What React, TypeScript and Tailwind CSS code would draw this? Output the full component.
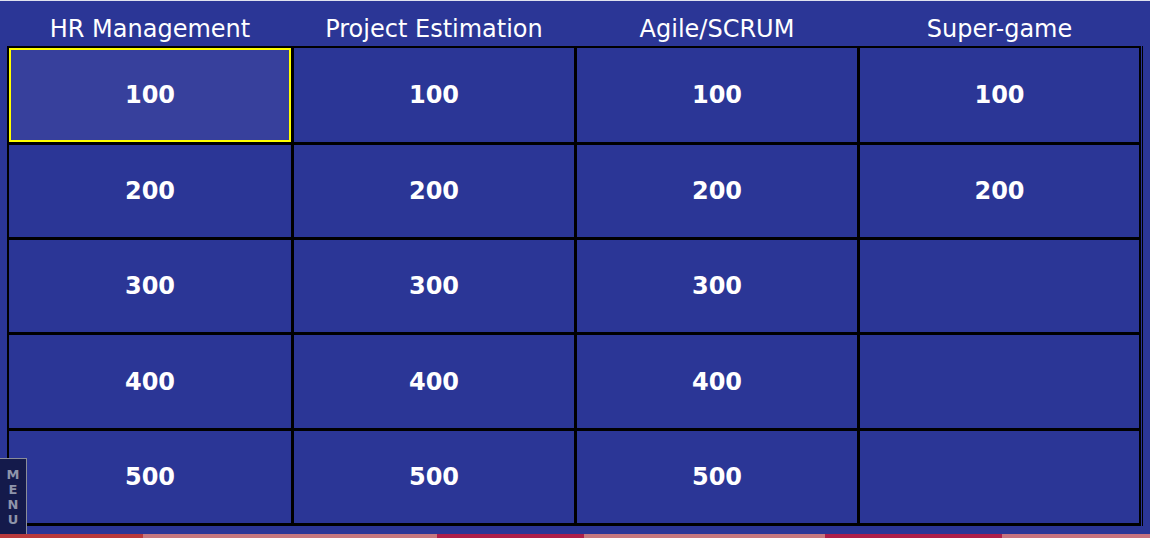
const categories = ["HR Management", "Project Estimation", "Agile/SCRUM", "Super-game"];

// null = question already played
const board: (number | null)[][] = [
  [100, 100, 100, 100],
  [200, 200, 200, 200],
  [300, 300, 300, null],
  [400, 400, 400, null],
  [500, 500, 500, null],
];

const strip = [
  { w: "w-[143px]", c: "bg-[#b93a3c]" },
  { w: "w-[294px]", c: "bg-[#c6787f]" },
  { w: "w-[147px]", c: "bg-[#ae1f4a]" },
  { w: "w-[241px]", c: "bg-[#c6787f]" },
  { w: "w-[177px]", c: "bg-[#ae1f4a]" },
  { w: "flex-1", c: "bg-[#c7737f]" },
];

export default function App() {
  return (
    <div
      className="relative flex h-[538px] w-[1150px] flex-col overflow-hidden bg-[#2b3696] text-white"
      style={{ fontFamily: '"DejaVu Sans", Verdana, sans-serif' }}
    >
      <div className="h-px bg-[#dfe2ee]" />

      {/* category headers */}
      <div className="ml-[9px] grid h-[45px] grid-cols-[282px_280px_280px_279px] gap-[3px]">
        {categories.map((name) => (
          <div key={name} className="pt-[14px] text-center text-[24px] leading-[28px]">
            {name}
          </div>
        ))}
      </div>

      {/* board */}
      <div className="ml-[7px] flex w-[1136px]">
        <div className="grid grid-cols-[282px_280px_280px_279px] grid-rows-[94px_92px_92px_93px_92px] gap-[3px] bg-black p-[2px] pb-[3px]">
          {board.flatMap((row, r) =>
            row.map((value, c) => {
              const active = r === 0 && c === 0;
              return (
                <div
                  key={`${r}-${c}`}
                  className={
                    active
                      ? "flex items-center justify-center border-2 border-[#ffff00] bg-[#37409c] text-[24px] font-bold"
                      : "flex items-center justify-center bg-[#2b3696] text-[24px] font-bold"
                  }
                >
                  {value ?? ""}
                </div>
              );
            })
          )}
        </div>
        <div className="w-px" />
        <div className="w-px bg-black" />
      </div>

      <div className="flex-1" />

      {/* bottom strip of next section */}
      <div className="flex h-[4px]">
        {strip.map((s, i) => (
          <div key={i} className={`${s.w} ${s.c}`} />
        ))}
      </div>

      {/* side menu tab */}
      <div className="absolute bottom-[4px] left-0 flex h-[76px] w-[27px] flex-col items-center border-r border-t border-[#8a8d99] bg-[#141a4b] pt-[8px] text-[13px] font-bold leading-[15px] text-[#8e94aa]">
        <span>M</span>
        <span>E</span>
        <span>N</span>
        <span>U</span>
      </div>
    </div>
  );
}
